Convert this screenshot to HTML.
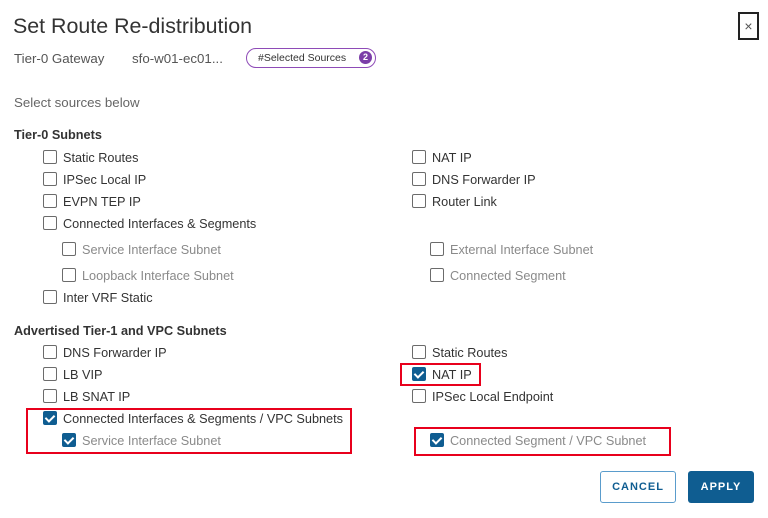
<!DOCTYPE html><html><head><style>
body{margin:0;width:768px;height:518px;background:#fff;font-family:"Liberation Sans",sans-serif;color:#333;position:relative;overflow:hidden}
.a{position:absolute;white-space:nowrap}
.t{font-size:12.7px;line-height:14px}
.cb{position:absolute;width:12px;height:12px;border:1px solid #6b6b6b;border-radius:2px;background:#fff}
.cb.on{background:#0f5d91;border-color:#0f5d91}
.cb.on:after{content:"";position:absolute;left:3px;top:1px;width:4px;height:7px;border:solid #fff;border-width:0 2px 2px 0;transform:rotate(45deg)}
.g{color:#8a8a8a}
.red{position:absolute;border:2px solid #e8001c}
</style></head><body>
<div class="a" style="left:13px;top:14px;font-size:21.4px;color:#333">Set Route Re-distribution</div>
<div class="a" style="left:738px;top:12px;width:17px;height:24px;border:2px solid #222;font-size:14px;text-align:center;line-height:24px;color:#555">×</div>
<div class="a t" style="left:14px;top:52px;font-size:13.3px;color:#555">Tier-0 Gateway</div>
<div class="a t" style="left:132px;top:52px;font-size:13.3px;color:#555">sfo-w01-ec01...</div>
<div class="a" style="left:246px;top:48px;width:128px;height:18px;border:1px solid #8e4bb7;border-radius:10px;font-size:10.5px;line-height:18px;color:#333"><span style="position:absolute;left:11px;top:0">#Selected Sources</span><span style="position:absolute;right:3px;top:2px;width:13px;height:13px;border-radius:50%;background:#7b3ea8;color:#fff;font-size:9px;line-height:13px;text-align:center;font-weight:bold">2</span></div>
<div class="a t" style="left:14px;top:96px;font-size:13.3px;color:#666">Select sources below</div>
<div class="a t" style="left:14px;top:128px;font-weight:bold;font-size:12.7px">Tier-0 Subnets</div>
<div class="a t" style="left:14px;top:324px;font-weight:bold;font-size:12.7px">Advertised Tier-1 and VPC Subnets</div>

<div class="cb" style="left:43px;top:150px"></div><div class="a t" style="left:63px;top:151px">Static Routes</div>
<div class="cb" style="left:43px;top:172px"></div><div class="a t" style="left:63px;top:173px">IPSec Local IP</div>
<div class="cb" style="left:43px;top:194px"></div><div class="a t" style="left:63px;top:195px">EVPN TEP IP</div>
<div class="cb" style="left:43px;top:216px"></div><div class="a t" style="left:63px;top:217px">Connected Interfaces &amp; Segments</div>
<div class="cb" style="left:62px;top:242px"></div><div class="a t g" style="left:82px;top:243px">Service Interface Subnet</div>
<div class="cb" style="left:62px;top:268px"></div><div class="a t g" style="left:82px;top:269px">Loopback Interface Subnet</div>
<div class="cb" style="left:43px;top:290px"></div><div class="a t" style="left:63px;top:291px">Inter VRF Static</div>

<div class="cb" style="left:412px;top:150px"></div><div class="a t" style="left:432px;top:151px">NAT IP</div>
<div class="cb" style="left:412px;top:172px"></div><div class="a t" style="left:432px;top:173px">DNS Forwarder IP</div>
<div class="cb" style="left:412px;top:194px"></div><div class="a t" style="left:432px;top:195px">Router Link</div>
<div class="cb" style="left:430px;top:242px"></div><div class="a t g" style="left:450px;top:243px">External Interface Subnet</div>
<div class="cb" style="left:430px;top:268px"></div><div class="a t g" style="left:450px;top:269px">Connected Segment</div>

<div class="cb" style="left:43px;top:345px"></div><div class="a t" style="left:63px;top:346px">DNS Forwarder IP</div>
<div class="cb" style="left:43px;top:367px"></div><div class="a t" style="left:63px;top:368px">LB VIP</div>
<div class="cb" style="left:43px;top:389px"></div><div class="a t" style="left:63px;top:390px">LB SNAT IP</div>
<div class="cb on" style="left:43px;top:411px"></div><div class="a t" style="left:63px;top:412px">Connected Interfaces &amp; Segments / VPC Subnets</div>
<div class="cb on" style="left:62px;top:433px"></div><div class="a t g" style="left:82px;top:434px">Service Interface Subnet</div>

<div class="cb" style="left:412px;top:345px"></div><div class="a t" style="left:432px;top:346px">Static Routes</div>
<div class="cb on" style="left:412px;top:367px"></div><div class="a t" style="left:432px;top:368px">NAT IP</div>
<div class="cb" style="left:412px;top:389px"></div><div class="a t" style="left:432px;top:390px">IPSec Local Endpoint</div>
<div class="cb on" style="left:430px;top:433px"></div><div class="a t g" style="left:450px;top:434px">Connected Segment / VPC Subnet</div>

<div class="red" style="left:26px;top:408px;width:322px;height:42px"></div>
<div class="red" style="left:400px;top:363px;width:77px;height:19px"></div>
<div class="red" style="left:414px;top:427px;width:253px;height:25px"></div>

<div class="a" style="left:600px;top:471px;width:74px;height:30px;border:1px solid #5a9ccc;border-radius:3px;color:#0f5d91;font-size:11px;font-weight:bold;letter-spacing:1px;text-align:center;line-height:30px">CANCEL</div>
<div class="a" style="left:688px;top:471px;width:66px;height:32px;background:#0f5d91;border-radius:3px;color:#fff;font-size:11px;font-weight:bold;letter-spacing:1px;text-align:center;line-height:32px">APPLY</div>
</body></html>
